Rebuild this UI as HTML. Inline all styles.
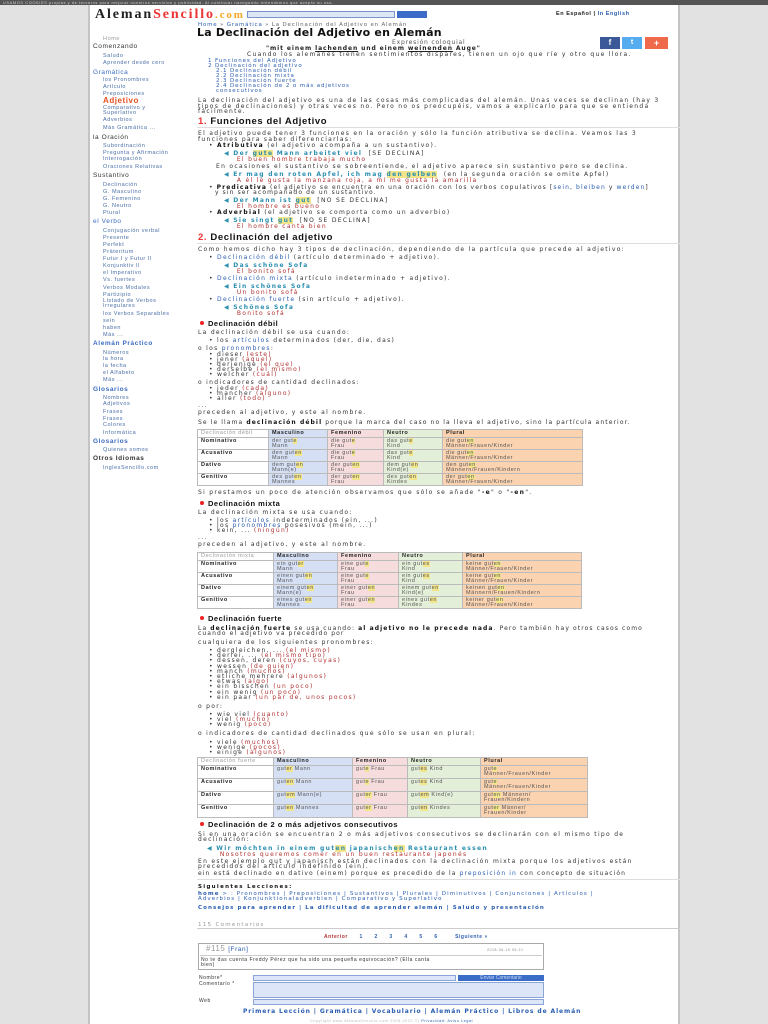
<!DOCTYPE html>
<html><head><meta charset="utf-8"><style>
*{margin:0;padding:0;box-sizing:border-box}
body{width:768px;height:1024px;overflow:hidden;background:#e2e2e2;font-family:"DejaVu Sans",sans-serif;position:relative;color:#333}
.wrap{position:absolute;left:88px;top:5px;width:592px;height:1019px;background:#fff;border-left:2px solid #c4c4c4;border-right:2px solid #c4c4c4}
.l{position:absolute;font-size:6px;line-height:6px;white-space:nowrap;letter-spacing:1.3px;font-family:"DejaVu Sans",sans-serif}
.lib{font-family:"Liberation Sans",sans-serif;letter-spacing:.55px}
.s{color:#4a6fa8;font-size:5.5px;left:103px;font-family:"Liberation Sans",sans-serif;letter-spacing:.55px}
.h{color:#333;font-size:6.5px;left:93px;letter-spacing:.6px;font-family:"Liberation Sans",sans-serif}
.hb{color:#3b6cc0;font-size:6.5px;left:93px;font-weight:bold;letter-spacing:.6px;font-family:"Liberation Sans",sans-serif}
.b{color:#2a5db0}.r{color:#b03030}.g{color:#2b8fb0;font-weight:bold}.y{background:#f3e58a}
.k{font-weight:bold;color:#111}
h2{position:absolute;font-size:9.5px;font-weight:bold;letter-spacing:.6px;color:#111;left:198px;font-family:"Liberation Sans",sans-serif}
h2 span{color:#e33}
h3{position:absolute;font-size:7.5px;font-weight:bold;letter-spacing:.5px;color:#111;left:200px;font-family:"Liberation Sans",sans-serif}
h3:before{content:"";display:inline-block;width:4px;height:4px;border-radius:50%;background:#e22;margin-right:4px;vertical-align:1px}
table{position:absolute;border-collapse:collapse;font-size:5.5px;line-height:5px;letter-spacing:.6px;left:197px;font-family:"Liberation Sans",sans-serif}
td{border:1px solid #bbb;padding:1px 3px 0;vertical-align:top;color:#555;height:12px}
td.c{font-weight:bold;color:#222}
tr.hd td{font-weight:bold;color:#222;height:8px}
.c1{background:#d6e0f5}.c2{background:#f6dcdc}.c3{background:#e4efd9}.c4{background:#fbd3b0}
.hr{position:absolute;left:197px;width:483px;height:1px;background:#ddd}
</style></head><body>
<div style="position:absolute;left:0;top:0;width:768px;height:5px;background:#555"></div>
<div class="l lib" style="left:3px;top:0;font-size:4px;line-height:5px;color:#ccc">USAMOS COOKIES propias y de terceros para mejorar nuestros servicios y publicidad. Al continuar navegando entendemos que acepta su uso.</div>
<div class="wrap"></div>
<div class="l" style="left:95px;top:8px;font-size:14px;line-height:14px;font-weight:bold;font-family:'Liberation Serif',serif;letter-spacing:1.9px;color:#222">Aleman<span style="color:#e33">Sencillo</span><span style="color:#f5a623;font-size:11px">.com</span></div>
<div style="position:absolute;left:247px;top:11px;width:148px;height:7px;border:1px solid #7a96c8;background:#dde6f5"></div>
<div style="position:absolute;left:397px;top:11px;width:30px;height:7px;background:#3a6cc8"></div>
<div class="l lib" style="left:556px;top:11px;font-size:5.5px;font-weight:bold;color:#222">En Español | <span class="b">In English</span></div>

<div class="l h" style="top:36px;left:103px;color:#999;font-size:5.5px">Home</div>
<div class="l h" style="top:44px">Comenzando</div>
<div class="l s" style="top:53px">Saludo</div>
<div class="l s" style="top:60px">Aprender desde cero</div>
<div class="l hb" style="top:70px;font-weight:normal">Gramática</div>
<div class="l s" style="top:77px">los Pronombres</div>
<div class="l s" style="top:84px">Artículo</div>
<div class="l s" style="top:91px">Preposiciones</div>
<div class="l s" style="top:98px;color:#e8501f;font-size:8px;font-weight:bold">Adjetivo</div>
<div class="l s" style="top:106px;line-height:5px">Comparativo y<br>Superlativo</div>
<div class="l s" style="top:117px">Adverbios</div>
<div class="l s" style="top:125px">Más Gramática ...</div>
<div class="l h" style="top:135px">la Oración</div>
<div class="l s" style="top:143px">Subordinación</div>
<div class="l s" style="top:150px">Pregunta y Afirmación</div>
<div class="l s" style="top:156px">Interrogación</div>
<div class="l s" style="top:164px">Oraciones Relativas</div>
<div class="l h" style="top:173px">Sustantivo</div>
<div class="l s" style="top:182px">Declinación</div>
<div class="l s" style="top:189px">G. Masculino</div>
<div class="l s" style="top:196px">G. Femenino</div>
<div class="l s" style="top:203px">G. Neutro</div>
<div class="l s" style="top:210px">Plural</div>
<div class="l hb" style="top:219px;font-weight:normal">el Verbo</div>
<div class="l s" style="top:228px">Conjugación verbal</div>
<div class="l s" style="top:235px">Presente</div>
<div class="l s" style="top:242px">Perfekt</div>
<div class="l s" style="top:249px">Präteritum</div>
<div class="l s" style="top:256px">Futur I y Futur II</div>
<div class="l s" style="top:263px">Konjunktiv II</div>
<div class="l s" style="top:270px">el Imperativo</div>
<div class="l s" style="top:277px">Vs. fuertes</div>
<div class="l s" style="top:285px">Verbos Modales</div>
<div class="l s" style="top:292px">Partizipio</div>
<div class="l s" style="top:299px;line-height:5px">Listado de Verbos<br>Irregulares</div>
<div class="l s" style="top:311px">los Verbos Separables</div>
<div class="l s" style="top:318px">sein</div>
<div class="l s" style="top:325px">haben</div>
<div class="l s" style="top:332px">Más ...</div>
<div class="l hb" style="top:341px">Alemán Práctico</div>
<div class="l s" style="top:350px">Números</div>
<div class="l s" style="top:356px">la hora</div>
<div class="l s" style="top:363px">la fecha</div>
<div class="l s" style="top:370px">el Alfabeto</div>
<div class="l s" style="top:377px">Más ...</div>
<div class="l hb" style="top:387px">Glosarios</div>
<div class="l s" style="top:395px">Nombres</div>
<div class="l s" style="top:401px">Adjetivos</div>
<div class="l s" style="top:409px">Frases</div>
<div class="l s" style="top:416px">Frases</div>
<div class="l s" style="top:422px">Colores</div>
<div class="l s" style="top:430px">Informática</div>
<div class="l hb" style="top:439px">Glosarios</div>
<div class="l s" style="top:447px">Quienes somos</div>
<div class="l h" style="top:456px;font-weight:bold">Otros Idiomas</div>
<div class="l s" style="top:465px">InglesSencillo.com</div>

<div class="l" style="left:198px;top:22px;font-size:5.5px;color:#666;letter-spacing:.8px"><span class="b">Home</span> » <span class="b">Gramática</span> » La Declinación del Adjetivo en Alemán</div>
<div class="l" style="left:197px;top:27px;font-size:11px;line-height:12px;font-weight:bold;color:#111;letter-spacing:.2px">La Declinación del Adjetivo en Alemán</div>
<div style="position:absolute;left:600px;top:37px;width:20px;height:12px;background:#3b5998;color:#fff;font:bold 8px 'Liberation Sans';text-align:center;line-height:12px">f</div>
<div style="position:absolute;left:622px;top:37px;width:20px;height:12px;background:#55acee;color:#fff;font:bold 7px 'Liberation Sans';text-align:center;line-height:12px">t</div>
<div style="position:absolute;left:645px;top:37px;width:23px;height:12px;background:#ee6a4a;color:#fff;font:bold 9px 'Liberation Sans';text-align:center;line-height:12px">+</div>
<div class="l" style="left:392px;top:40px;color:#555;letter-spacing:.8px">Expresión coloquial</div>
<div class="l" style="left:266px;top:46px;font-weight:bold;color:#222;letter-spacing:.9px">"mit einem <u>lachenden</u> und einem <u>weinenden</u> Auge"</div>
<div class="l" style="left:247px;top:52px;color:#333">Cuando los alemanes tienen sentimientos dispares, tienen un ojo que ríe y otro que llora.</div>
<div class="l b" style="left:208px;top:59px;line-height:5px;font-size:5.5px;letter-spacing:.9px">1 Funciones del Adjetivo<br>2 Declinación del adjetivo<br>&nbsp;&nbsp;&nbsp;2.1 Declinación débil<br>&nbsp;&nbsp;&nbsp;2.2 Declinación mixta<br>&nbsp;&nbsp;&nbsp;2.3 Declinación fuerte<br>&nbsp;&nbsp;&nbsp;2.4 Declinación de 2 o más adjetivos<br>&nbsp;&nbsp;&nbsp;consecutivos</div>
<div class="l" style="left:198px;top:98px;line-height:5.5px">La declinación del adjetivo es una de las cosas más complicadas del alemán. Unas veces se declinan (hay 3<br>tipos de declinaciones) y otras veces no. Pero no os preocupéis, vamos a explicarlo para que se entienda<br>fácilmente.</div>
<h2 style="top:116px"><span>1.</span> Funciones del Adjetivo</h2>
<div class="hr" style="top:127px"></div>
<div class="l" style="left:198px;top:131px;line-height:5.5px">El adjetivo puede tener 3 funciones en la oración y sólo la función atributiva se declina. Veamos las 3<br>funciones para saber diferenciarlas:</div>
<div class="l" style="left:209px;top:143px">• <span class="k">Atributiva</span> (el adjetivo acompaña a un sustantivo).</div>
<div class="l" style="left:224px;top:151px;line-height:5.5px"><span class="g">◀ Der <span class="y">gute</span> Mann arbeitet viel</span> &nbsp;[SE DECLINA]<br>&nbsp;&nbsp;&nbsp;&nbsp;<span class="r">El buen hombre trabaja mucho</span></div>
<div class="l" style="left:216px;top:164px">En ocasiones el sustantivo se sobreentiende, el adjetivo aparece sin sustantivo pero se declina.</div>
<div class="l" style="left:224px;top:172px;line-height:5.5px"><span class="g">◀ Er mag den roten Apfel, ich mag <span class="y">den gelben</span></span> &nbsp;(en la segunda oración se omite Apfel)<br>&nbsp;&nbsp;&nbsp;&nbsp;<span class="r">A él le gusta la manzana roja, a mí me gusta la amarilla</span></div>
<div class="l" style="left:209px;top:185px;line-height:5px;letter-spacing:1.1px">• <span class="k">Predicativa</span> (el adjetivo se encuentra en una oración con los verbos copulativos [<span class="b">sein</span>, <span class="b">bleiben</span> y <span class="b">werden</span>]<br>&nbsp;&nbsp;y sin ser acompañado de un sustantivo.</div>
<div class="l" style="left:224px;top:198px;line-height:5.5px"><span class="g">◀ Der Mann ist <span class="y">gut</span></span> &nbsp;[NO SE DECLINA]<br>&nbsp;&nbsp;&nbsp;&nbsp;<span class="r">El hombre es bueno</span></div>
<div class="l" style="left:209px;top:210px">• <span class="k">Adverbial</span> (el adjetivo se comporta como un adverbio)</div>
<div class="l" style="left:224px;top:218px;line-height:5.5px"><span class="g">◀ Sie singt <span class="y">gut</span></span> &nbsp;[NO SE DECLINA]<br>&nbsp;&nbsp;&nbsp;&nbsp;<span class="r">El hombre canta bien</span></div>
<h2 style="top:232px"><span>2.</span> Declinación del adjetivo</h2>
<div class="hr" style="top:243px"></div>
<div class="l" style="left:198px;top:247px">Como hemos dicho hay 3 tipos de declinación, dependiendo de la partícula que precede al adjetivo:</div>
<div class="l" style="left:209px;top:255px">• <span class="b">Declinación débil</span> (artículo determinado + adjetivo).</div>
<div class="l" style="left:224px;top:263px;line-height:5.5px"><span class="g">◀ Das schöne Sofa</span><br>&nbsp;&nbsp;&nbsp;&nbsp;<span class="r">El bonito sofá</span></div>
<div class="l" style="left:209px;top:276px">• <span class="b">Declinación mixta</span> (artículo indeterminado + adjetivo).</div>
<div class="l" style="left:224px;top:284px;line-height:5.5px"><span class="g">◀ Ein schönes Sofa</span><br>&nbsp;&nbsp;&nbsp;&nbsp;<span class="r">Un bonito sofá</span></div>
<div class="l" style="left:209px;top:297px">• <span class="b">Declinación fuerte</span> (sin artículo + adjetivo).</div>
<div class="l" style="left:224px;top:305px;line-height:5.5px"><span class="g">◀ Schönes Sofa</span><br>&nbsp;&nbsp;&nbsp;&nbsp;<span class="r">Bonito sofá</span></div>
<h3 style="top:319px">Declinación débil</h3>
<div class="l" style="left:198px;top:330px">La declinación débil se usa cuando:</div>
<div class="l" style="left:209px;top:338px">• los <span class="b">artículos</span> determinados (der, die, das)</div>
<div class="l" style="left:198px;top:346px">o los <span class="b">pronombres</span>:</div>
<div class="l" style="left:209px;top:353px;line-height:4.9px">• dieser <span class="r">(este)</span><br>• jener <span class="r">(aquel)</span><br>• derjenige <span class="r">(el que)</span><br>• derselbe <span class="r">(el mismo)</span><br>• welcher <span class="r">(cuál)</span></div>
<div class="l" style="left:198px;top:380px">o indicadores de cantidad declinados:</div>
<div class="l" style="left:209px;top:387px;line-height:4.9px">• jeder <span class="r">(cada)</span><br>• mancher <span class="r">(alguno)</span><br>• aller <span class="r">(todo)</span></div>
<div class="l" style="left:198px;top:403px">...</div>
<div class="l" style="left:198px;top:410px">preceden al adjetivo, y este al nombre.</div>
<div class="l" style="left:198px;top:420px;letter-spacing:1.1px">Se le llama <span class="k">declinación débil</span> porque la marca del caso no la lleva el adjetivo, sino la partícula anterior.</div>
<table style="top:429px;width:386px">
<tr class="hd"><td style="width:71px;font-weight:normal;color:#999">Declinación débil</td><td class="c1" style="width:59px">Masculino</td><td class="c2" style="width:56px">Femenino</td><td class="c3" style="width:59px">Neutro</td><td class="c4">Plural</td></tr>
<tr><td class="c">Nominativo</td><td class="c1">der gut<span class="y">e</span><br>Mann</td><td class="c2">die gut<span class="y">e</span><br>Frau</td><td class="c3">das gut<span class="y">e</span><br>Kind</td><td class="c4">die gut<span class="y">en</span><br>Männer/Frauen/Kinder</td></tr>
<tr><td class="c">Acusativo</td><td class="c1">den gut<span class="y">en</span><br>Mann</td><td class="c2">die gut<span class="y">e</span><br>Frau</td><td class="c3">das gut<span class="y">e</span><br>Kind</td><td class="c4">die gut<span class="y">en</span><br>Männer/Frauen/Kinder</td></tr>
<tr><td class="c">Dativo</td><td class="c1">dem gut<span class="y">en</span><br>Mann(e)</td><td class="c2">der gut<span class="y">en</span><br>Frau</td><td class="c3">dem gut<span class="y">en</span><br>Kind(e)</td><td class="c4">den gut<span class="y">en</span><br>Männern/Frauen/Kindern</td></tr>
<tr><td class="c">Genitivo</td><td class="c1">des gut<span class="y">en</span><br>Mannes</td><td class="c2">der gut<span class="y">en</span><br>Frau</td><td class="c3">des gut<span class="y">en</span><br>Kindes</td><td class="c4">der gut<span class="y">en</span><br>Männer/Frauen/Kinder</td></tr>
</table>
<div class="l" style="left:198px;top:490px">Si prestamos un poco de atención observamos que sólo se añade "<span class="k">-e</span>" o "<span class="k">-en</span>".</div>
<h3 style="top:499px">Declinación mixta</h3>
<div class="l" style="left:198px;top:510px">La declinación mixta se usa cuando:</div>
<div class="l" style="left:209px;top:518px;line-height:5px">• los <span class="b">artículos</span> indeterminados (ein, ...)<br>• los <span class="b">pronombres</span> posesivos (mein, ...)<br>• kein, ... <span class="r">(ningún)</span></div>
<div class="l" style="left:198px;top:535px">...</div>
<div class="l" style="left:198px;top:542px">preceden al adjetivo, y este al nombre.</div>
<table style="top:552px;width:385px">
<tr class="hd"><td style="width:76px;font-weight:normal;color:#999">Declinación mixta</td><td class="c1" style="width:64px">Masculino</td><td class="c2" style="width:61px">Femenino</td><td class="c3" style="width:64px">Neutro</td><td class="c4">Plural</td></tr>
<tr><td class="c">Nominativo</td><td class="c1">ein gut<span class="y">er</span><br>Mann</td><td class="c2">eine gut<span class="y">e</span><br>Frau</td><td class="c3">ein gut<span class="y">es</span><br>Kind</td><td class="c4">keine gut<span class="y">en</span><br>Männer/Frauen/Kinder</td></tr>
<tr><td class="c">Acusativo</td><td class="c1">einen gut<span class="y">en</span><br>Mann</td><td class="c2">eine gut<span class="y">e</span><br>Frau</td><td class="c3">ein gut<span class="y">es</span><br>Kind</td><td class="c4">keine gut<span class="y">en</span><br>Männer/Frauen/Kinder</td></tr>
<tr><td class="c">Dativo</td><td class="c1">einem gut<span class="y">en</span><br>Mann(e)</td><td class="c2">einer gut<span class="y">en</span><br>Frau</td><td class="c3">einem gut<span class="y">en</span><br>Kind(e)</td><td class="c4">keinen gut<span class="y">en</span><br>Männern/Frauen/Kindern</td></tr>
<tr><td class="c">Genitivo</td><td class="c1">eines gut<span class="y">en</span><br>Mannes</td><td class="c2">einer gut<span class="y">en</span><br>Frau</td><td class="c3">eines gut<span class="y">en</span><br>Kindes</td><td class="c4">keiner gut<span class="y">en</span><br>Männer/Frauen/Kinder</td></tr>
</table>
<h3 style="top:614px">Declinación fuerte</h3>
<div class="l" style="left:198px;top:626px;line-height:5px;letter-spacing:1.1px">La <span class="k">declinación fuerte</span> se usa cuando: <span class="k">al adjetivo no le precede nada</span>. Pero también hay otros casos como<br>cuando el adjetivo va precedido por</div>
<div class="l" style="left:198px;top:640px">cualquiera de los siguientes pronombres:</div>
<div class="l" style="left:209px;top:648px;line-height:5.2px">• dergleichen, ... <span class="r">(el mismo)</span><br>• derlei, ... <span class="r">(el mismo tipo)</span><br>• dessen, deren <span class="r">(cuyos, cuyas)</span><br>• wessen <span class="r">(de quien)</span><br>• manch <span class="r">(muchos)</span><br>• etliche mehrere <span class="r">(algunos)</span><br>• etwas <span class="r">(algo)</span><br>• ein bisschen <span class="r">(un poco)</span><br>• ein wenig <span class="r">(un poco)</span><br>• ein paar <span class="r">(un par de, unos pocos)</span></div>
<div class="l" style="left:198px;top:704px">o por:</div>
<div class="l" style="left:209px;top:712px;line-height:5.2px">• wie viel <span class="r">(cuanto)</span><br>• viel <span class="r">(mucho)</span><br>• wenig <span class="r">(poco)</span></div>
<div class="l" style="left:198px;top:731px">o indicadores de cantidad declinados que sólo se usan en plural:</div>
<div class="l" style="left:209px;top:740px;line-height:5.2px">• viele <span class="r">(muchos)</span><br>• wenige <span class="r">(pocos)</span><br>• einige <span class="r">(algunos)</span></div>
<table style="top:757px;width:391px">
<tr class="hd"><td style="width:76px;font-weight:normal;color:#999">Declinación fuerte</td><td class="c1" style="width:79px">Masculino</td><td class="c2" style="width:55px">Femenino</td><td class="c3" style="width:73px">Neutro</td><td class="c4">Plural</td></tr>
<tr><td class="c" style="height:13px">Nominativo</td><td class="c1">gut<span class="y">er</span> Mann</td><td class="c2">gut<span class="y">e</span> Frau</td><td class="c3">gut<span class="y">es</span> Kind</td><td class="c4">gut<span class="y">e</span><br>Männer/Frauen/Kinder</td></tr>
<tr><td class="c" style="height:13px">Acusativo</td><td class="c1">gut<span class="y">en</span> Mann</td><td class="c2">gut<span class="y">e</span> Frau</td><td class="c3">gut<span class="y">es</span> Kind</td><td class="c4">gut<span class="y">e</span><br>Männer/Frauen/Kinder</td></tr>
<tr><td class="c" style="height:13px">Dativo</td><td class="c1">gut<span class="y">em</span> Mann(e)</td><td class="c2">gut<span class="y">er</span> Frau</td><td class="c3">gut<span class="y">em</span> Kind(e)</td><td class="c4">gut<span class="y">en</span> Männern/<br>Frauen/Kindern</td></tr>
<tr><td class="c" style="height:13px">Genitivo</td><td class="c1">gut<span class="y">en</span> Mannes</td><td class="c2">gut<span class="y">er</span> Frau</td><td class="c3">gut<span class="y">en</span> Kindes</td><td class="c4">gut<span class="y">er</span> Männer/<br>Frauen/Kinder</td></tr>
</table>
<h3 style="top:820px">Declinación de 2 o más adjetivos consecutivos</h3>
<div class="l" style="left:198px;top:832px;line-height:5px">Si en una oración se encuentran 2 o más adjetivos consecutivos se declinarán con el mismo tipo de<br>declinación:</div>
<div class="l" style="left:207px;top:846px;line-height:5.5px"><span class="g">◀ Wir möchten in einem gut<span class="y">en</span> japanisch<span class="y">en</span> Restaurant essen</span><br>&nbsp;&nbsp;&nbsp;&nbsp;<span class="r">Nosotros queremos comer en un buen restaurante japonés</span></div>
<div class="l" style="left:198px;top:859px;line-height:5px">En este ejemplo gut y japanisch están declinados con la declinación mixta porque los adjetivos están<br>precedidos del artículo indefinido (ein).</div>
<div class="l" style="left:198px;top:871px;letter-spacing:1.1px">ein está declinado en dativo (einem) porque es precedido de la <span class="b">preposición in</span> con concepto de situación</div>
<div class="hr" style="top:879px"></div>
<div class="l k" style="left:198px;top:884px;font-size:5.5px">Siguientes Lecciones:</div>
<div class="l b" style="left:198px;top:892px;line-height:5px;font-size:5.5px;letter-spacing:1.1px"><b>home</b> &gt; : Pronombres | Preposiciones | Sustantivos | Plurales | Diminutivos | Conjunciones | Artículos |<br>Adverbios | Konjunktionaladverbien | Comparativo y Superlativo</div>
<div class="l b" style="left:198px;top:905px;font-weight:bold;font-size:5.5px;letter-spacing:1.1px">Consejos para aprender | La dificultad de aprender alemán | Saludo y presentación</div>
<div class="l" style="left:198px;top:922px;color:#999;font-size:5.5px">115 Comentarios</div>
<div class="hr" style="top:928px;background:#ccc"></div>
<div class="l lib" style="left:324px;top:934px;font-size:5px;font-weight:bold" ><span class="r">Anterior</span>&nbsp;&nbsp;&nbsp;&nbsp;&nbsp;&nbsp;<span class="b">1 &nbsp;&nbsp;&nbsp;&nbsp;&nbsp;2 &nbsp;&nbsp;&nbsp;&nbsp;&nbsp;3 &nbsp;&nbsp;&nbsp;&nbsp;&nbsp;4 &nbsp;&nbsp;&nbsp;&nbsp;&nbsp;5 &nbsp;&nbsp;&nbsp;&nbsp;&nbsp;6 &nbsp;&nbsp;&nbsp;&nbsp;&nbsp;&nbsp;&nbsp;&nbsp;Siguiente »</span></div>
<div style="position:absolute;left:198px;top:943px;width:346px;height:27px;border:1px solid #aaa"></div>
<div class="l lib" style="left:206px;top:945px;font-size:8px;line-height:8px;color:#999">#115 <span class="b" style="font-size:6.5px">[Fran]</span></div>
<div class="l lib" style="left:487px;top:947px;font-size:3.5px;color:#888">2018-06-15 09:21</div>
<div class="hr" style="top:955px;left:200px;width:342px;background:#ccc"></div>
<div class="l lib" style="left:201px;top:958px;line-height:5px;font-size:5px">No te das cuenta Freddy Pérez que ha sido una pequeña equivocación? (Ella canta<br>bien)</div>
<div class="l lib" style="left:199px;top:975px;font-size:5px">Nombre*</div>
<div class="l lib" style="left:199px;top:981px;font-size:5px">Comentario *</div>
<div class="l lib" style="left:199px;top:998px;font-size:5px">Web</div>
<div style="position:absolute;left:253px;top:975px;width:203px;height:6px;border:1px solid #8aa6d8;background:#dce6f8"></div>
<div style="position:absolute;left:458px;top:975px;width:86px;height:6px;background:#3a6cc8;color:#cde;font:5px 'Liberation Sans';text-align:center;line-height:6px">Enviar Comentario</div>
<div style="position:absolute;left:253px;top:982px;width:291px;height:16px;border:1px solid #8aa6d8;background:#dce6f8"></div>
<div style="position:absolute;left:253px;top:999px;width:291px;height:6px;border:1px solid #8aa6d8;background:#dce6f8"></div>
<div class="l b" style="left:243px;top:1009px;font-weight:bold;font-size:6px;letter-spacing:.9px">Primera Lección | Gramática | Vocabulario | Alemán Práctico | Libros de Alemán</div>
<div class="l lib" style="left:310px;top:1018px;font-size:3.8px;color:#bbb">Copyright www.AlemanSencillo.com 2008-2022 ©| <span class="b">Privacidad: Aviso Legal</span></div>
</body></html>
